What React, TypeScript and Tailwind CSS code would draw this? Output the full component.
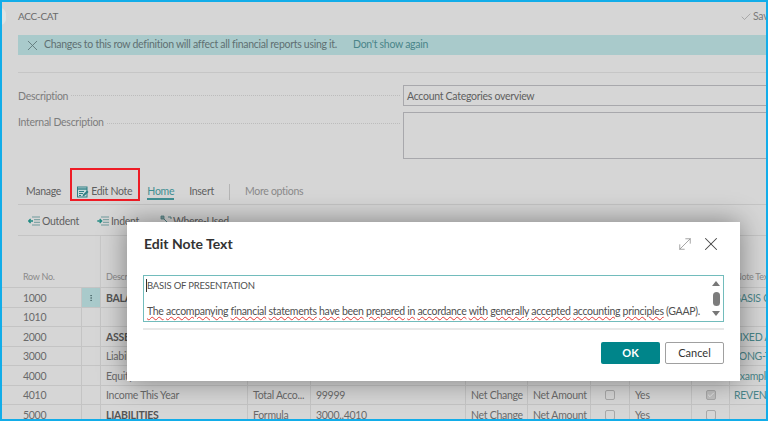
import React from 'react';
import { Check, X, MoveDiagonal, EllipsisVertical } from 'lucide-react';

const GRID = 'grid grid-cols-[16px_64px_19px_147px_63px_155px_62px_63px_39px_62px_38px_1fr]';

const rows = [
  { no: '1000', desc: 'BALANCE SHEET', bold: true, type: '', range: '', a: '', b: '', c: null, yes: '', d: null, note: 'BASIS OF PRESENTATION', active: true },
  { no: '1010', desc: '', type: '', range: '', a: '', b: '', c: null, yes: '', d: null, note: '' },
  { no: '2000', desc: 'ASSETS', bold: true, type: '', range: '', a: '', b: '', c: null, yes: '', d: null, note: 'FIXED ASSETS' },
  { no: '3000', desc: 'Liabilities', type: '', range: '', a: '', b: '', c: null, yes: '', d: null, note: 'LONG-TERM' },
  { no: '4000', desc: 'Equity', type: '', range: '', a: '', b: '', c: null, yes: '', d: null, note: 'Example' },
  { no: '4010', desc: 'Income This Year', type: 'Total Acco...', range: '99999', a: 'Net Change', b: 'Net Amount', c: false, yes: 'Yes', d: true, note: 'REVENUE' },
  { no: '5000', desc: 'LIABILITIES', bold: true, type: 'Formula', range: '3000..4010', a: 'Net Change', b: 'Net Amount', c: false, yes: 'Yes', d: false, note: '' },
];

const Cell = ({ children, className = '' }: { children?: React.ReactNode; className?: string }) => (
  <div className={`flex items-center overflow-hidden whitespace-nowrap border-r border-[#c4c4c4] px-[5px] pt-[1px] ${className}`}>{children}</div>
);

const Box = ({ checked }: { checked: boolean }) => (
  <div className={`flex h-[10px] w-[10px] items-center justify-center rounded-[2px] border border-[#a8a8a8] ${checked ? 'bg-[#c0c0c0]' : ''}`}>
    {checked && <Check size={8} className="text-[#e4e4e4]" strokeWidth={3} />}
  </div>
);

const NoteIcon = () => (
  <svg width="12" height="12" viewBox="0 0 12 12" fill="none">
    <rect x="0.5" y="1" width="9.5" height="10" fill="#c9dcdc" stroke="#2f7f84" />
    <path d="M0.5 3h9.5" stroke="#2f7f84" strokeWidth="1.4" />
    <path d="M2 5.5h5M2 7.5h4M2 9.5h2" stroke="#2f7f84" />
    <path d="M5.5 10.5l.6-2L10 4.5l1.5 1.5-4 3.8z" fill="#2f7f84" />
  </svg>
);

const IndentIcon = ({ flip }: { flip?: boolean }) => (
  <svg width="12" height="11" viewBox="0 0 12 11" fill="none">
    <path d="M4 1h8M6 3.7h6M6 6.3h6M4 9h8" stroke="#6f9a9c" />
    {flip ? (
      <path d="M5 5H.8M2.6 3L.6 5l2 2" stroke="#1f8a82" strokeWidth="1.3" />
    ) : (
      <path d="M.3 5h4.2M2.7 3l2 2-2 2" stroke="#1f8a82" strokeWidth="1.3" />
    )}
  </svg>
);

const WhereUsedIcon = () => (
  <svg width="13" height="13" viewBox="0 0 13 13" fill="none">
    <path d="M1 1h3v3H1z" fill="#7a9a9c" stroke="#4e7f82" strokeWidth="0.8" />
    <path d="M4 4l3 3" stroke="#4e7f82" />
    <path d="M7 7h5v4H7z" fill="#2f8f8c" />
    <path d="M8 2h3v2" stroke="#4e7f82" />
  </svg>
);

const words = 'The accompanying financial statements have been prepared in accordance with generally accepted accounting principles'.split(' ');

export default function App() {
  return (
    <div
      className="relative h-[421px] w-[768px] overflow-hidden border-2 border-[#12ade9] bg-[#d6d6d6] text-[10.5px] tracking-[-0.28px] text-[#6a6a6a]"
      style={{ fontFamily: 'Lato, "Noto Sans", sans-serif' }}
    >
      <div className="absolute -left-[8px] top-[6px] h-[17px] w-[12px] rounded-full bg-[#dfe3e3]" />

      {/* page header */}
      <div className="flex h-[33px] items-center justify-between pb-[8px] pl-[16px] pt-[4px]">
        <span className="text-[10px]">ACC-CAT</span>
        <span className="flex w-[26px] items-center gap-[1px] overflow-hidden text-[#7a7a7a]">
          <Check size={12} strokeWidth={1} className="shrink-0" />
          Save
        </span>
      </div>

      {/* notification bar */}
      <div className="ml-[16px] flex h-[20px] items-center bg-[#a9cacb] pl-[6px]">
        <X size={17} strokeWidth={1.2} className="mr-[3px] text-[#5c7375]" />
        <span className="text-[#5f7072]">Changes to this row definition will affect all financial reports using it.</span>
        <span className="ml-[16px] text-[#4a8589]">Don't show again</span>
      </div>

      <div className="ml-[16px] mt-[17px] border-t border-[#c6c6c6]" />

      {/* general fields */}
      <div className="ml-[16px] mt-[12px] flex h-[21px] items-center">
        <span className="shrink-0 pt-[2px] text-[#7d7d7d]">Description</span>
        <span className="mx-[3px] flex-1 border-b border-dotted border-[#bcbcbc]" />
        <div className="flex h-[21px] w-[363px] shrink-0 items-center border border-r-0 border-[#a8a8ac] pl-[3px] pt-[2px] text-[#5f5f5f]">Account Categories overview</div>
      </div>
      <div className="ml-[16px] mt-[6px] flex h-[47px] items-start">
        <span className="mt-[3px] shrink-0 text-[#7d7d7d]">Internal Description</span>
        <span className="mx-[3px] mt-[11px] flex-1 border-b border-dotted border-[#bcbcbc]" />
        <div className="h-[47px] w-[363px] shrink-0 border border-r-0 border-[#a8a8ac]" />
      </div>

      {/* action bar */}
      <div className="ml-[16px] mt-[9px] flex h-[37px] items-center border-b border-[#c4c4c4] pt-[11px]">
        <span className="ml-[8px] text-[#5f5f5f]">Manage</span>
        <div className="relative ml-[16px] flex items-center gap-[2px] text-[#5f5f5f]">
          <NoteIcon />
          Edit Note
          <div className="absolute -left-[7px] -top-[16px] h-[33px] w-[70px] border-2 border-[#ee1c25]" />
        </div>
        <span className="ml-[15px] border-b-2 border-[#3f8f93] leading-[14px] text-[#3f8f93]">Home</span>
        <span className="ml-[15px] text-[#5f5f5f]">Insert</span>
        <span className="ml-[15px] h-[16px] border-l border-[#b5b5b5]" />
        <span className="ml-[15px] text-[#8a8a8a]">More options</span>
      </div>

      <div className="ml-[16px] flex h-[31px] items-center border-b border-[#c4c4c4] pt-[3px] text-[#5f5f5f]">
        <span className="ml-[10px] flex items-center gap-[2px]"><IndentIcon flip />Outdent</span>
        <span className="ml-[18px] flex items-center gap-[2px]"><IndentIcon />Indent</span>
        <span className="ml-[21px] flex items-center"><WhereUsedIcon />Where-Used</span>
      </div>

      {/* lines table */}
      <div className={`${GRID} h-[51px] text-[9px] text-[#8a8a8a]`}>
        <div />
        <div className="flex items-end px-[5px] pb-[4px]">Row No.</div>
        <div className="border-r border-[#c8c8c8]" />
        <div className="flex items-end px-[5px] pb-[4px]">Description</div>
        <div className="col-span-7" />
        <div className="flex items-end whitespace-nowrap px-[5px] pb-[4px]">Note Text</div>
      </div>
      {rows.map((r) => (
        <div key={r.no} className={`${GRID} h-[19.5px] border-t border-[#c4c4c4] leading-none`}>
          <div />
          <Cell>{r.no}</Cell>
          <Cell className={r.active ? 'justify-center bg-[#a9cacb] px-0 text-[#3f5c5e]' : 'px-0'}>
            {r.active && <EllipsisVertical size={14} strokeWidth={2} />}
          </Cell>
          <Cell className={r.bold ? 'font-bold text-[#555]' : ''}>{r.desc}</Cell>
          <Cell>{r.type}</Cell>
          <Cell>{r.range}</Cell>
          <Cell>{r.a}</Cell>
          <Cell>{r.b}</Cell>
          <Cell className="justify-center">{r.c !== null && <Box checked={r.c} />}</Cell>
          <Cell>{r.yes}</Cell>
          <Cell className="justify-center">{r.d !== null && <Box checked={r.d} />}</Cell>
          <Cell className="border-r-0 pl-[4px] text-[#4a8589]">{r.note}</Cell>
        </div>
      ))}

      {/* note dialog */}
      <div className="absolute left-[125px] top-[220px] flex h-[159px] w-[613px] flex-col bg-white px-[16px] tracking-normal shadow-[0_0_26px_rgba(0,0,0,0.42)]">
        <div className="flex h-[53px] items-start justify-between pl-[1px] pt-[11px]">
          <span className="text-[14px] font-bold leading-[22px] text-[#333]">Edit Note Text</span>
          <div className="flex h-[22px] items-center gap-[6px] pr-[2px] text-[#888]">
            <MoveDiagonal size={18} strokeWidth={1} />
            <X size={22} strokeWidth={1.1} className="text-[#444]" />
          </div>
        </div>
        <div className="relative h-[47px] border border-[#72bcbc] pl-[3px] text-[10.5px] leading-[13px] tracking-[-0.3px] text-[#505050]">
          <div className="pt-[3px]">
            <div className="-ml-px border-l border-[#333] text-[9.5px] tracking-[-0.2px]">BASIS OF PRESENTATION</div>
            <div className="mt-[13px] whitespace-nowrap">
              {words.map((w) => (
                <span key={w}>
                  <span className="underline decoration-[#e53935] decoration-wavy decoration-1">{w}</span>{' '}
                </span>
              ))}
              (GAAP).
            </div>
          </div>
          <div className="absolute right-0 top-0 flex h-full w-[14px] flex-col items-center justify-between py-[5px]">
            <span className="h-0 w-0 border-x-[4px] border-b-[5px] border-x-transparent border-b-[#777]" />
            <span className="h-[14px] w-[7px] rounded-full bg-[#7c7c7c]" />
            <span className="h-0 w-0 border-x-[4px] border-t-[5px] border-x-transparent border-t-[#777]" />
          </div>
        </div>
        <div className="mt-[6px] border-t-2 border-[#e8e8e8]" />
        <div className="mt-[12px] flex justify-end gap-[5px]">
          <button className="h-[22px] w-[59px] rounded-[2px] bg-[#00858a] text-[11px] font-bold text-white">OK</button>
          <button className="h-[22px] w-[59px] rounded-[2px] border border-[#a0a0a0] bg-white text-[11px] text-[#333]">Cancel</button>
        </div>
      </div>
    </div>
  );
}
